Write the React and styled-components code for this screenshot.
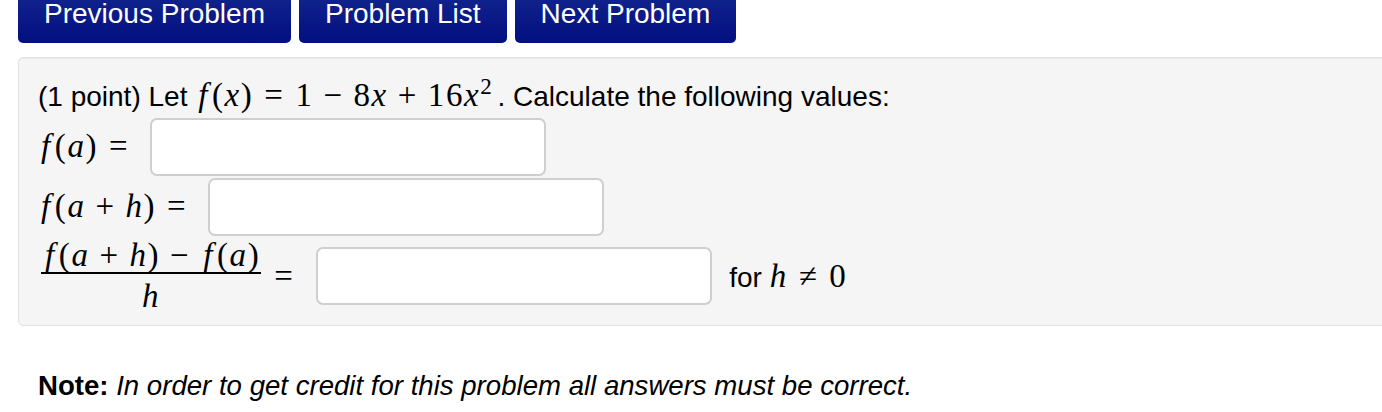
import styled, { createGlobalStyle } from "styled-components";

const GlobalStyle = createGlobalStyle`
  html, body {
    margin: 0;
    padding: 0;
    background: #fff;
    overflow: hidden;
  }
  body {
    font-family: "Liberation Sans", Arial, Helvetica, sans-serif;
    color: #000;
  }
`;

const Page = styled.div`
  width: 1382px;
  height: 412px;
  overflow: hidden;
  padding-left: 18px;
  box-sizing: border-box;
`;

const Nav = styled.div`
  display: flex;
  gap: 8px;
  margin-top: -16px;
`;

const NavButton = styled.button`
  font-family: "Liberation Sans", Arial, sans-serif;
  font-size: 28px;
  line-height: 1.2;
  color: #fff;
  padding: 13px 26px 12px;
  border: none;
  border-radius: 5px;
  background: linear-gradient(#14288f, #020f80);
  cursor: pointer;
`;

const Well = styled.div`
  margin-top: 14px;
  margin-right: -40px;
  padding: 17px 19px 9px;
  background: #f5f5f5;
  border: 1px solid #e3e3e3;
  border-radius: 5px;
  box-shadow: inset 0 1px 1px rgba(0, 0, 0, 0.05);
  font-size: 28px;
`;

const Statement = styled.div`
  height: 42px;
  line-height: 40px;
  white-space: nowrap;
`;

const Row = styled.div`
  display: flex;
  align-items: center;
  gap: ${(p) => p.gap || 10}px;
  white-space: nowrap;
`;

const AnswerBox = styled.input`
  width: 396px;
  height: 58px;
  box-sizing: border-box;
  margin: 1px 0;
  background: #fff;
  border: 2px solid #cfcfcf;
  border-radius: 7px;
  outline: none;
`;

const Math = styled.span`
  font-family: "Liberation Serif", "Times New Roman", serif;
  font-size: 33px;
  font-style: normal;
  letter-spacing: 1.6px;
  margin-right: ${(p) => p.trail || 0}px;
`;

const FracEq = styled(Math)`
  display: inline-flex;
  align-items: center;
`;

const V = styled.i`
  font-style: italic;
  padding: 0 ${(p) => (p.f ? "3px" : "0")};
`;

const Op = styled.span`
  margin: 0 ${(p) => (p.rel ? "0.33em" : "0.3em")};
`;

const Sup = styled.sup`
  font-size: 0.7em;
  line-height: 0;
`;

const Fraction = styled.span`
  display: inline-flex;
  flex-direction: column;
  align-items: center;
  margin: 2px 2px 2px 3px;
`;

const Numer = styled.span`
  padding: 0 1px 1px;
  border-bottom: 2px solid #000;
  line-height: 32px;
`;

const Denom = styled.span`
  padding-top: 4px;
  line-height: 36px;
`;

const Trail = styled.span`
  margin-left: 6px;
  font-size: 28px;
`;

const Note = styled.p`
  margin: 40px 0 0 20px;
  font-size: 27.6px;
  line-height: 40px;
  white-space: nowrap;
`;

export default function App() {
  return (
    <Page>
      <GlobalStyle />
      <Nav>
        <NavButton>Previous Problem</NavButton>
        <NavButton>Problem List</NavButton>
        <NavButton>Next Problem</NavButton>
      </Nav>
      <Well>
        <Statement>
          (1 point) Let{" "}
          <Math trail={4}>
            <V f>f</V>(<V>x</V>)<Op rel>=</Op>1<Op>−</Op>8<V>x</V>
            <Op>+</Op>16<V>x</V>
            <Sup>2</Sup>
          </Math>
          . Calculate the following values:
        </Statement>
        <Row>
          <Math>
            <V f>f</V>(<V>a</V>)<Op rel>=</Op>
          </Math>
          <AnswerBox />
        </Row>
        <Row>
          <Math>
            <V f>f</V>(<V>a</V>
            <Op>+</Op>
            <V>h</V>)<Op rel>=</Op>
          </Math>
          <AnswerBox />
        </Row>
        <Row gap={11}>
          <FracEq>
            <Fraction>
              <Numer>
                <V f>f</V>(<V>a</V>
                <Op>+</Op>
                <V>h</V>)<Op>−</Op>
                <V f>f</V>(<V>a</V>)
              </Numer>
              <Denom>
                <V>h</V>
              </Denom>
            </Fraction>
            <Op rel>=</Op>
          </FracEq>
          <AnswerBox />
          <Trail>
            for{" "}
            <Math>
              <V>h</V>
              <Op rel>≠</Op>0
            </Math>
          </Trail>
        </Row>
      </Well>
      <Note>
        <b>Note:</b> <i>In order to get credit for this problem all answers must be correct.</i>
      </Note>
    </Page>
  );
}
